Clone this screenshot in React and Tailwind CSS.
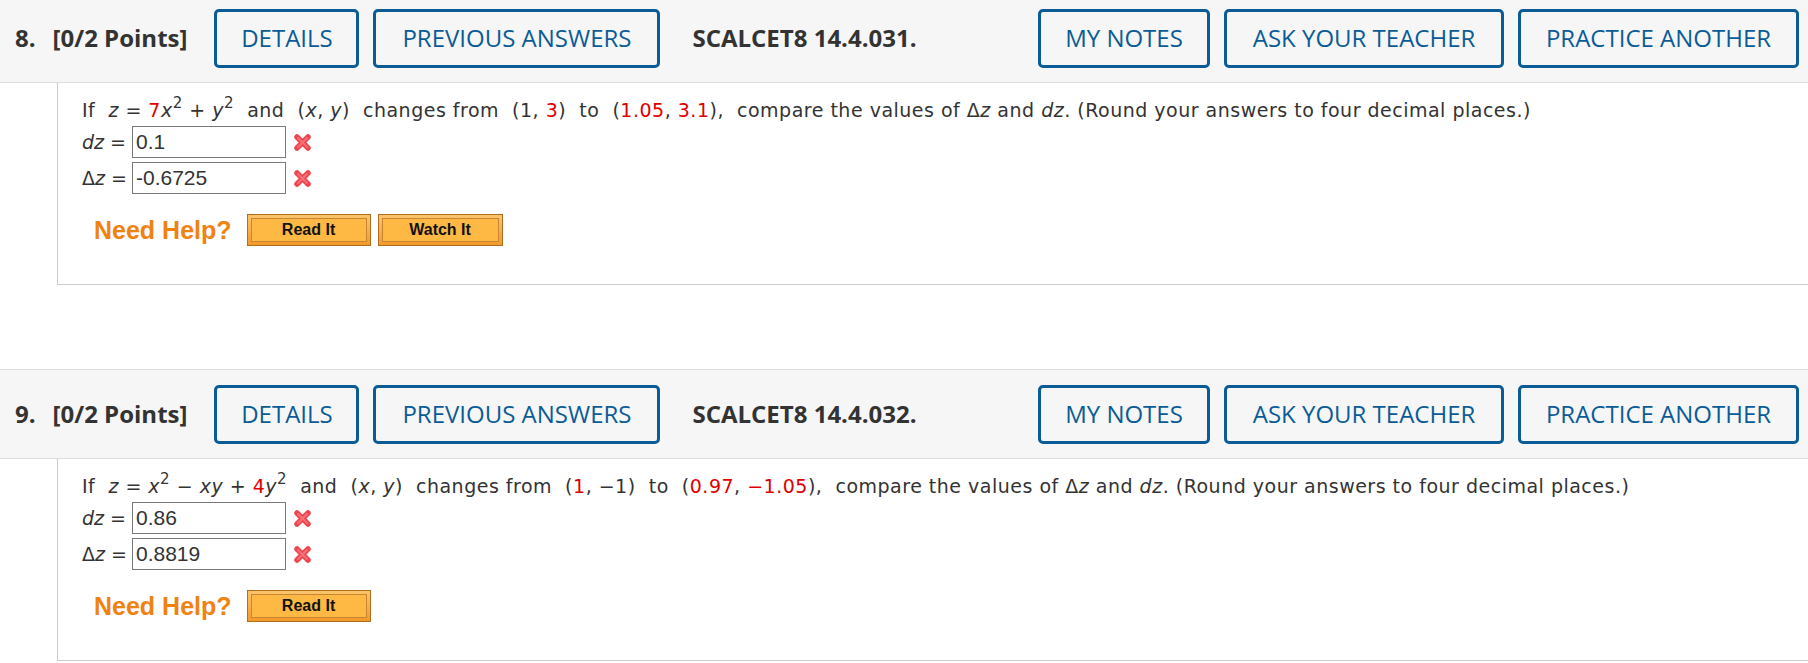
import React from 'react';

const RED = 'text-[#e00000]';

const HeadBtn = ({ w, children }) => (
  <button
    className={`${w} h-[59px] flex items-center justify-center rounded-[5px] border-[3px] border-[#0b5c96] text-[#0b5c96] text-[24px] bg-[#f6f6f6] font-['Open_Sans',sans-serif]`}
  >
    {children}
  </button>
);

const HelpBtn = ({ w, children }) => (
  <div className={`${w} h-[32px] border border-[#b06d22] bg-gradient-to-b from-[#fbc56a] to-[#f29a26] p-[3px]`}>
    <div className="h-full border border-[#c98533] bg-[#fdb943] flex items-center justify-center text-[16px] font-bold text-[#111] font-['Liberation_Sans',Arial,sans-serif]">
      {children}
    </div>
  </div>
);

const Cross = () => (
  <svg width="19" height="19" viewBox="0 0 19 19" className="ml-[7px]">
    <path d="M4 4 L15 15 M15 4 L4 15" stroke="#ee4650" strokeWidth="5.5" strokeLinecap="round" />
    <path d="M5 5 L14 14 M14 5 L5 14" stroke="#fb6d75" strokeWidth="2" strokeLinecap="round" />
  </svg>
);

const Sup = ({ children }) => <sup className="text-[15px] -top-[9px]">{children}</sup>;

const AnswerRow = ({ label, value }) => (
  <div className="flex items-center h-[32px]">
    <span className="w-[50px] whitespace-nowrap text-[19px] tracking-normal">{label}</span>
    <div className="w-[154px] h-[32px] border border-[#7a7a7a] flex items-center pl-[3px] text-[21px] tracking-normal text-[#333] font-['Liberation_Sans',Arial,sans-serif]">
      {value}
    </div>
    <Cross />
  </div>
);

const Question = ({ num, code, prompt, answers, watch, className }) => (
  <section className={className}>
    <header className="h-[90px] flex items-center justify-between bg-[#f6f6f6] border-y border-[#dddddd] pl-[15px] pr-[9px] font-['Open_Sans',sans-serif] text-[#333]">
      <div className="flex items-center">
        <span className="text-[24px] font-bold">{num}.</span>
        <span className="ml-[17px] text-[24px] font-bold">[0/2 Points]</span>
        <div className="ml-[27px] flex gap-[14px]">
          <HeadBtn w="w-[145px]">DETAILS</HeadBtn>
          <HeadBtn w="w-[287px]">PREVIOUS ANSWERS</HeadBtn>
        </div>
        <span className="ml-[32px] text-[24px] font-bold">{code}</span>
      </div>
      <div className="flex gap-[14px]">
        <HeadBtn w="w-[172px]">MY NOTES</HeadBtn>
        <HeadBtn w="w-[280px]">ASK YOUR TEACHER</HeadBtn>
        <HeadBtn w="w-[281px]">PRACTICE ANOTHER</HeadBtn>
      </div>
    </header>
    <div className="ml-[57px] border-l border-b border-[#cccccc] pl-[24px] pt-[15px] pb-[38px] text-[#333] font-['DejaVu_Sans',Verdana,sans-serif]">
      <p className="h-[24px] leading-[24px] whitespace-nowrap text-[19px] tracking-[0.5px]">{prompt}</p>
      <div className="mt-[4px] flex flex-col gap-[4px]">
        <AnswerRow label={<><i>dz</i> =</>} value={answers[0]} />
        <AnswerRow label={<>Δ<i>z</i> =</>} value={answers[1]} />
      </div>
      <div className="mt-[20px] ml-[12px] h-[32px] flex items-center">
        <span className="text-[25px] leading-none font-bold text-[#f0820f] font-['Liberation_Sans',Arial,sans-serif]">Need Help?</span>
        <div className="ml-[15px] flex gap-[7px]">
          <HelpBtn w="w-[124px]">Read It</HelpBtn>
          {watch && <HelpBtn w="w-[125px]">Watch It</HelpBtn>}
        </div>
      </div>
    </div>
  </section>
);

const tail = (
  <>
    compare the values of Δ<i>z</i> and <i>dz</i>. (Round your answers to four decimal places.)
  </>
);

export default function App() {
  return (
    <div className="w-[1808px] h-[663px] overflow-hidden bg-white">
      <div className="-mt-[7px]">
        <Question
          className="mb-[84px]"
          num={8}
          code="SCALCET8 14.4.031."
          watch
          answers={['0.1', '-0.6725']}
          prompt={
            <>
              If&nbsp; <i>z</i> = <span className={RED}>7</span><i>x</i><Sup>2</Sup> + <i>y</i><Sup>2</Sup>&nbsp; and&nbsp; (<i>x</i>, <i>y</i>)&nbsp; changes from&nbsp; (1, <span className={RED}>3</span>)&nbsp; to&nbsp; (<span className={RED}>1.05</span>, <span className={RED}>3.1</span>),&nbsp; {tail}
            </>
          }
        />
        <Question
          num={9}
          code="SCALCET8 14.4.032."
          answers={['0.86', '0.8819']}
          prompt={
            <>
              If&nbsp; <i>z</i> = <i>x</i><Sup>2</Sup> − <i>xy</i> + <span className={RED}>4</span><i>y</i><Sup>2</Sup>&nbsp; and&nbsp; (<i>x</i>, <i>y</i>)&nbsp; changes from&nbsp; (<span className={RED}>1</span>, −1)&nbsp; to&nbsp; (<span className={RED}>0.97</span>, <span className={RED}>−1.05</span>),&nbsp; {tail}
            </>
          }
        />
      </div>
    </div>
  );
}
